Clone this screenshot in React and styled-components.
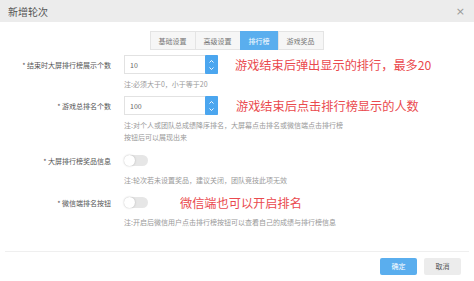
import React, { useState } from 'react'
import styled, { createGlobalStyle } from 'styled-components'

const GlobalStyle = createGlobalStyle`
  html, body {
    margin: 0;
    padding: 0;
    background: #fff;
  }
  body {
    font-family: "Noto Sans CJK SC", "Noto Sans", sans-serif;
  }
`

const tabs = ['基础设置', '高级设置', '排行榜', '游戏奖品']

export default function App() {
  const [active, setActive] = useState(2)
  return (
    <Modal>
      <GlobalStyle />
      <Header>
        <Title>新增轮次</Title>
        <Close>×</Close>
      </Header>

      <TabBar>
        {tabs.map((t, i) => (
          <Tab key={t} active={i === active} onClick={() => setActive(i)}>{t}</Tab>
        ))}
      </TabBar>

      <Form>
        <Item top={5}>
          <Line>
            <Label>* 结束时大屏排行榜展示个数</Label>
            <NumberInput value="10" />
            <Remark gap={17}>游戏结束后弹出显示的排行，最多20</Remark>
          </Line>
          <Note>注:必须大于0，小于等于20</Note>
        </Item>

        <Item top={6}>
          <Line>
            <Label>* 游戏总排名个数</Label>
            <NumberInput value="100" />
            <Remark gap={18}>游戏结束后点击排行榜显示的人数</Remark>
          </Line>
          <Note>注:对个人或团队总成绩降序排名，大屏幕点击排名或微信端点击排行榜<br />按钮后可以展现出来</Note>
        </Item>

        <Item top={8}>
          <Line>
            <Label>* 大屏排行榜奖品信息</Label>
            <Switch />
          </Line>
          <Note>注:轮次若未设置奖品，建议关闭，团队竞技此项无效</Note>
        </Item>

        <Item top={7}>
          <Line>
            <Label>* 微信端排名按钮</Label>
            <Switch />
            <Remark gap={32}>微信端也可以开启排名</Remark>
          </Line>
          <Note>注:开启后微信用户点击排行榜按钮可以查看自己的成绩与排行榜信息</Note>
        </Item>
      </Form>

      <Footer>
        <Button primary>确定</Button>
        <Button>取消</Button>
      </Footer>
    </Modal>
  )
}

function NumberInput({ value }) {
  return (
    <InputBox>
      <InputText>{value}</InputText>
      <Spinner>
        <svg width="7" height="14" viewBox="0 0 7 14">
          <path d="M1.5 4.5 L3.5 2.5 L5.5 4.5" fill="none" stroke="#fff" strokeWidth="0.9" />
          <path d="M1.5 9.5 L3.5 11.5 L5.5 9.5" fill="none" stroke="#fff" strokeWidth="0.9" />
        </svg>
      </Spinner>
    </InputBox>
  )
}

function Switch() {
  return (
    <Track>
      <Knob />
    </Track>
  )
}

const Modal = styled.div`
  width: 474px;
  height: 281px;
  display: flex;
  flex-direction: column;
  background: #fff;
  overflow: hidden;
`

const Header = styled.div`
  height: 22px;
  background: #ececec;
  display: flex;
  align-items: center;
  justify-content: space-between;
  padding: 0 8px;
`

const Title = styled.div`
  font-size: 10px;
  color: #555;
`

const Close = styled.div`
  font-size: 11px;
  color: #999;
  font-family: "DejaVu Sans", sans-serif;
  margin-right: 1px;
`

const TabBar = styled.div`
  display: flex;
  justify-content: center;
  margin-top: 9px;
  padding-left: 0;
`

const Tab = styled.div`
  height: 17px;
  padding: 0 8px;
  display: flex;
  align-items: center;
  font-size: 7px;
  border: 1px solid ${p => (p.active ? '#5aaeee' : '#e4e4e4')};
  background: ${p => (p.active ? '#5aaeee' : '#f6f6f6')};
  color: ${p => (p.active ? '#fff' : '#777')};
  margin-left: -1px;
  cursor: pointer;
`

const Form = styled.div`
  display: flex;
  flex-direction: column;
`

const Item = styled.div`
  margin-top: ${p => p.top}px;
  display: flex;
  flex-direction: column;
`

const Line = styled.div`
  height: 19px;
  display: flex;
  align-items: center;
`

const Label = styled.div`
  width: 111px;
  margin-right: 13px;
  text-align: right;
  font-size: 7px;
  color: #555;
  white-space: nowrap;
`

const InputBox = styled.div`
  width: 94px;
  height: 19px;
  box-sizing: border-box;
  border: 1px solid #e2e2e2;
  display: flex;
  align-items: stretch;
`

const InputText = styled.div`
  flex: 1;
  padding-left: 5px;
  font-size: 7px;
  color: #666;
  display: flex;
  align-items: center;
`

const Spinner = styled.div`
  width: 13px;
  background: #4ba6ef;
  display: flex;
  align-items: center;
  justify-content: center;
  margin: -1px -1px -1px 0;
  border-radius: 1px;
`

const Remark = styled.div`
  margin-left: ${p => p.gap}px;
  font-size: 12.2px;
  color: #ea4a4e;
  white-space: nowrap;
`

const Note = styled.div`
  margin: 4px 0 0 124px;
  font-size: 7px;
  line-height: 12px;
  color: #999;
`

const Track = styled.div`
  width: 24px;
  height: 11px;
  border-radius: 6px;
  background: #e6e6e6;
  position: relative;
`

const Knob = styled.div`
  position: absolute;
  left: 0;
  top: 0;
  width: 11px;
  height: 11px;
  border-radius: 50%;
  background: #fff;
  box-shadow: 0 0 2px rgba(0, 0, 0, 0.25);
`

const Footer = styled.div`
  margin-top: auto;
  margin-left: 5px;
  margin-right: 5px;
  border-top: 1px solid #efefef;
  height: 28px;
  padding: 0 8px 0 0;
  display: flex;
  justify-content: flex-end;
  align-items: center;
  gap: 7px;
  margin-bottom: 1px;
`

const Button = styled.div`
  width: 37px;
  height: 17px;
  border-radius: 2px;
  display: flex;
  align-items: center;
  justify-content: center;
  font-size: 7px;
  background: ${p => (p.primary ? '#5aaeee' : '#ececec')};
  color: ${p => (p.primary ? '#fff' : '#555')};
`
